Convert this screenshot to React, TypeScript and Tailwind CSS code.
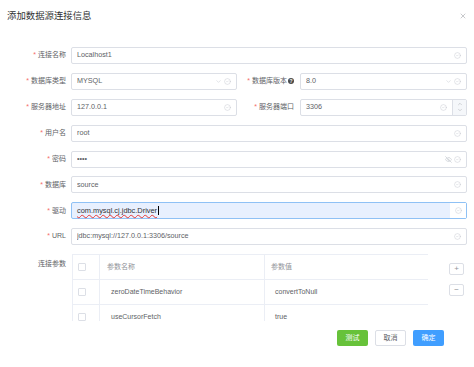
import { CircleCheck, ChevronDown, ChevronUp, EyeOff, X } from 'lucide-react';
import type { ReactNode } from 'react';

const font = { fontFamily: '"Liberation Sans", Arial, "Noto Sans CJK SC", sans-serif' };

function Label({ text, required = true, extra }: { text: string; required?: boolean; extra?: ReactNode }) {
    return (
        <span className="flex items-center justify-end whitespace-nowrap text-[7px] text-[#606266]">
            {required && <span className="mr-[2px] text-[#f56c6c]">*</span>}
            {text}
            {extra}
        </span>
    );
}

function Check() {
    return <CircleCheck size={7} strokeWidth={1.5} className="text-[#c0c4cc]" />;
}

function Input({ value, suffix, className = '' }: { value: string; suffix?: ReactNode; className?: string }) {
    return (
        <div className={`flex h-[17px] items-center rounded-[2px] border border-[#dcdfe6] bg-white pl-[5px] pr-[5px] ${className}`}>
            <span className="flex-1 truncate text-[7.2px] text-[#606266]">{value}</span>
            <span className="flex items-center gap-[2px]">
                {suffix}
                <Check />
            </span>
        </div>
    );
}

const params = [
    { name: 'zeroDateTimeBehavior', value: 'convertToNull' },
    { name: 'useCursorFetch', value: 'true' },
];

export default function App() {
    return (
        <div className="relative h-[367px] w-[474px] overflow-hidden bg-white" style={font}>
            {/* header */}
            <div className="flex h-[32px] items-center justify-between pl-[7px] pr-[7px]">
                <span className="text-[9.4px] text-[#303133]">添加数据源连接信息</span>
                <X size={8} strokeWidth={1.5} className="text-[#909399]" />
            </div>

            {/* form */}
            <div className="mt-[15px] flex flex-col gap-[8.9px] pr-[7px]">
                <div className="flex items-center">
                    <div className="w-[66px]"><Label text="连接名称" /></div>
                    <Input value="Localhost1" className="ml-[5px] flex-1" />
                </div>

                <div className="flex items-center">
                    <div className="w-[66px]"><Label text="数据库类型" /></div>
                    <Input
                        value="MYSQL"
                        className="ml-[5px] w-[166px]"
                        suffix={<ChevronDown size={7} strokeWidth={1.5} className="text-[#c0c4cc]" />}
                    />
                    <div className="w-[63px] pr-[6px]">
                        <Label
                            text="数据库版本"
                            extra={
                                <span className="ml-[1px] flex h-[6px] w-[6px] items-center justify-center rounded-full bg-[#4a4a4a] text-[5px] font-bold leading-none text-white">
                                    ?
                                </span>
                            }
                        />
                    </div>
                    <Input
                        value="8.0"
                        className="flex-1"
                        suffix={<ChevronDown size={7} strokeWidth={1.5} className="text-[#c0c4cc]" />}
                    />
                </div>

                <div className="flex items-center">
                    <div className="w-[66px]"><Label text="服务器地址" /></div>
                    <Input value="127.0.0.1" className="ml-[5px] w-[166px]" />
                    <div className="w-[63px] pr-[6px]"><Label text="服务器端口" /></div>
                    <div className="flex h-[17px] flex-1 items-center rounded-[2px] border border-[#dcdfe6] bg-white pl-[5px]">
                        <span className="flex-1 text-[7.2px] text-[#606266]">3306</span>
                        <span className="mr-[5px]"><Check /></span>
                        <div className="flex h-full w-[14px] flex-col items-center justify-center border-l border-[#dcdfe6] bg-[#f5f7fa] text-[#909399]">
                            <ChevronUp size={6} strokeWidth={1.5} />
                            <ChevronDown size={6} strokeWidth={1.5} />
                        </div>
                    </div>
                </div>

                <div className="flex items-center">
                    <div className="w-[66px]"><Label text="用户名" /></div>
                    <Input value="root" className="ml-[5px] flex-1" />
                </div>

                <div className="flex items-center">
                    <div className="w-[66px]"><Label text="密码" /></div>
                    <Input
                        value="••••"
                        className="ml-[5px] flex-1"
                        suffix={<EyeOff size={7} strokeWidth={2} className="text-[#c0c4cc]" />}
                    />
                </div>

                <div className="flex items-center">
                    <div className="w-[66px]"><Label text="数据库" /></div>
                    <Input value="source" className="ml-[5px] flex-1" />
                </div>

                <div className="flex items-center">
                    <div className="w-[66px]"><Label text="驱动" /></div>
                    <div className="ml-[5px] flex h-[17px] flex-1 items-center rounded-[2px] border border-[#8fc1f5] bg-[#e8f0fe] pl-[5px]">
                        <span className="text-[7.4px] text-[#303133] underline decoration-[#e53935] decoration-wavy decoration-[0.5px] underline-offset-[1px]">
                            com.mysql.cj.jdbc.Driver
                        </span>
                        <span className="ml-[1px] h-[9px] w-px bg-black" />
                        <span className="flex-1" />
                        <span className="flex h-full w-[16px] items-center justify-center bg-white">
                            <Check />
                        </span>
                    </div>
                </div>

                <div className="flex items-center">
                    <div className="w-[66px]"><Label text="URL" /></div>
                    <Input value="jdbc:mysql://127.0.0.1:3306/source" className="ml-[5px] flex-1" />
                </div>
            </div>

            {/* params */}
            <div className="mt-[9px] flex">
                <div className="w-[66px] pt-[5px]">
                    <Label text="连接参数" required={false} />
                </div>
                <div className="ml-[6px] h-[67px] w-[356px] overflow-hidden border-t border-l border-[#ebeef5]">
                    <div className="flex h-[25px] items-center border-b border-[#ebeef5] text-[7px] text-[#909399]">
                        <div className="flex h-full w-[27px] items-center pl-[5px] border-r border-[#ebeef5]">
                            <span className="h-[8px] w-[8px] rounded-[1px] border border-[#dcdfe6] bg-white" />
                        </div>
                        <div className="flex h-full w-[165px] items-center pl-[7px] border-r border-[#ebeef5]">参数名称</div>
                        <div className="flex h-full flex-1 items-center pl-[6px]">参数值</div>
                    </div>
                    {params.map((p) => (
                        <div key={p.name} className="flex h-[25px] items-center border-b border-[#ebeef5] text-[7px] text-[#606266]">
                            <div className="flex h-full w-[27px] items-center pl-[5px] border-r border-[#ebeef5]">
                                <span className="h-[8px] w-[8px] rounded-[1px] border border-[#dcdfe6] bg-white" />
                            </div>
                            <div className="flex h-full w-[165px] items-center pl-[11px] border-r border-[#ebeef5]">{p.name}</div>
                            <div className="flex h-full flex-1 items-center pl-[10px]">{p.value}</div>
                        </div>
                    ))}
                </div>
                <div className="ml-[21px] flex flex-col gap-[9px] pt-[9px]">
                    <span className="flex h-[12px] w-[15px] items-center justify-center rounded-[2px] border border-[#dcdfe6] text-[8px] leading-none text-[#909399]">+</span>
                    <span className="flex h-[12px] w-[15px] items-center justify-center rounded-[2px] border border-[#dcdfe6] text-[8px] leading-none text-[#909399]">−</span>
                </div>
            </div>

            {/* footer */}
            <div className="mt-[9px] flex justify-end gap-[7px] pr-[30px]">
                <span className="flex h-[16px] w-[31px] items-center justify-center rounded-[2px] bg-[#67c23a] text-[7px] text-white">测试</span>
                <span className="flex h-[16px] w-[31px] items-center justify-center rounded-[2px] border border-[#dcdfe6] bg-white text-[7px] text-[#606266]">取消</span>
                <span className="flex h-[16px] w-[31px] items-center justify-center rounded-[2px] bg-[#409eff] text-[7px] text-white">确定</span>
            </div>
        </div>
    );
}
